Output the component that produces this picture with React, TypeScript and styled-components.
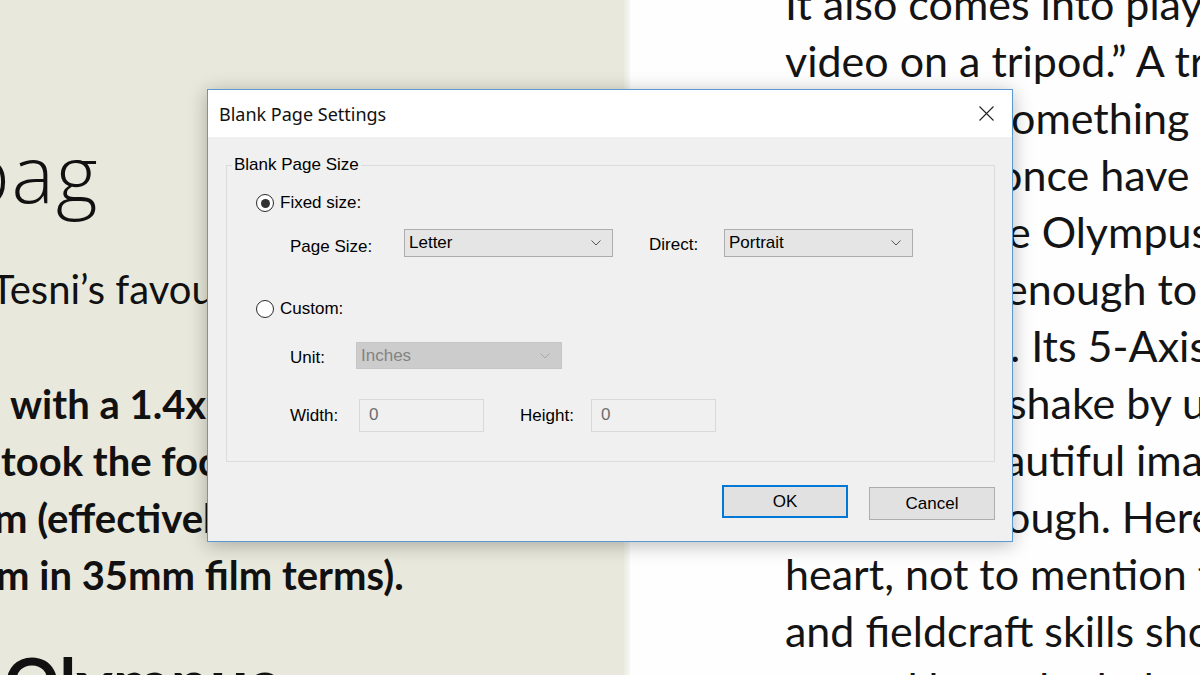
import React from 'react'
import styled, { createGlobalStyle } from 'styled-components'

const GlobalStyle = createGlobalStyle`
  html, body { margin: 0; padding: 0; }
  body { width: 1200px; height: 675px; overflow: hidden; background: #fefefe; }
  * { box-sizing: border-box; }
`

// ---- magazine spread behind the dialog ----

const Spread = styled.div`
  position: relative;
  display: flex;
  width: 1200px;
  height: 675px;
  overflow: hidden;
`

const LeftPage = styled.div`
  flex: none;
  width: 624px;
  padding-top: 131px;
  overflow: hidden;
  background: #e9e8dc;
  color: #111;
  font-family: Lato, "Liberation Sans", sans-serif;
  white-space: nowrap;
`

const Gutter = styled.div`
  flex: none;
  width: 6px;
  background: linear-gradient(to right, #ecebe2, #f7f7f3);
`

const RightPage = styled.div`
  flex: 1;
  padding-left: 155px;
  overflow: hidden;
  background: #fefefe;
  color: #141414;
  font-family: Lato, "Liberation Sans", sans-serif;
  font-size: 43px;
  line-height: 57px;
  white-space: nowrap;
`

const Column = styled.div`
  margin-top: -25px;
`

// the part of a line that sits under the dialog
const Covered = styled.span<{ $w: number }>`
  display: inline-block;
  width: ${p => p.$w}px;
  overflow: hidden;
  vertical-align: top;
`

const Headline = styled.div`
  margin-left: -38px;
  font-family: "Open Sans", Lato, sans-serif;
  font-size: 80px;
  font-weight: 300;
  letter-spacing: 2px;
  line-height: 81px;
`

const Intro = styled.div`
  margin: 49px 0 0 -9px;
  font-size: 40px;
  line-height: 57px;
`

const Caption = styled.div`
  margin-top: 58px;
  font-size: 40px;
  font-weight: 700;
  line-height: 57px;
`

const CaptionLine = styled.div<{ $shift: number }>`
  margin-left: ${p => p.$shift}px;
`

const SubHead = styled.div`
  margin: 49px 0 0 4px;
  font-size: 69px;
  font-weight: 700;
  line-height: 57px;
`

// ---- dialog ----

const Dialog = styled.div`
  position: absolute;
  left: 207px;
  top: 89px;
  width: 806px;
  height: 453px;
  display: flex;
  flex-direction: column;
  border: 1px solid #5a9ad2;
  background: #f0f0f0;
  box-shadow: 0 3px 18px rgba(0, 0, 0, 0.28);
  font-family: "Liberation Sans", Arial, sans-serif;
  font-size: 17px;
  color: #000;
`

const TitleBar = styled.div`
  height: 47px;
  display: flex;
  align-items: center;
  justify-content: space-between;
  padding: 0 18px 0 11px;
  background: #fff;
`

const Title = styled.div`
  font-family: "Noto Sans", sans-serif;
  font-size: 18px;
  color: #111;
`

const Body = styled.div`
  flex: 1;
  display: flex;
  flex-direction: column;
  padding: 18px 17px 0 18px;
`

const Group = styled.fieldset`
  margin: 0;
  padding: 0;
  border: 1px solid #dcdcdc;
`

const Legend = styled.legend`
  margin-left: 5px;
  padding: 0 2px;
  line-height: 20px;
`

const GroupInner = styled.div`
  display: flex;
  flex-direction: column;
  padding: 0 0 29px 29px;
`

const RadioRow = styled.div<{ $top: number }>`
  display: flex;
  align-items: center;
  gap: 6px;
  height: 22px;
  margin-top: ${p => p.$top}px;
`

const RadioCircle = styled.span<{ $checked?: boolean }>`
  position: relative;
  width: 18px;
  height: 18px;
  border: 1px solid #2b2b2b;
  border-radius: 50%;
  background: #fff;

  &::after {
    content: '';
    display: ${p => (p.$checked ? 'block' : 'none')};
    position: absolute;
    left: 3.5px;
    top: 3.5px;
    width: 9px;
    height: 9px;
    border-radius: 50%;
    background: #333;
  }
`

const FieldRow = styled.div<{ $top: number }>`
  display: flex;
  align-items: center;
  margin-top: ${p => p.$top}px;
  padding-left: 34px;
`

const Label = styled.span<{ $w: number; $gap?: number; $drop?: number }>`
  width: ${p => p.$w}px;
  margin-left: ${p => p.$gap || 0}px;
  padding-top: ${p => (p.$drop || 0) * 2}px;
`

const Combo = styled.div<{ $w: number; $disabled?: boolean }>`
  width: ${p => p.$w}px;
  height: ${p => (p.$disabled ? 27 : 28)}px;
  display: flex;
  align-items: center;
  justify-content: space-between;
  padding: 0 11px 0 4px;
  border: 1px solid ${p => (p.$disabled ? '#c6c6c6' : '#adadad')};
  background: ${p => (p.$disabled ? '#cccccc' : '#e5e5e5')};
  color: ${p => (p.$disabled ? '#838383' : '#000')};
`

const TextBox = styled.div`
  width: 125px;
  height: 33px;
  padding: 5px 9px;
  border: 1px solid #d9d9d9;
  background: #f0f0f0;
  color: #6d6d6d;
  line-height: 20px;
`

const Buttons = styled.div`
  display: flex;
  justify-content: flex-end;
  align-items: flex-start;
  gap: 21px;
  margin-top: 23px;
`

const Button = styled.div<{ $primary?: boolean }>`
  width: 126px;
  height: 33px;
  margin-top: ${p => (p.$primary ? 0 : 2)}px;
  display: flex;
  align-items: center;
  justify-content: center;
  border: ${p => (p.$primary ? '2px solid #0078d7' : '1px solid #adadad')};
  background: #e1e1e1;
`

const Chevron = ({ color }: { color: string }) => (
  <svg width="10" height="6" viewBox="0 0 10 6">
    <path d="M0.5 0.5 L5 5 L9.5 0.5" fill="none" stroke={color} strokeWidth="1" />
  </svg>
)

const CloseIcon = () => (
  <svg width="15" height="15" viewBox="0 0 15 15">
    <path d="M0.5 0.5 L14.5 14.5 M14.5 0.5 L0.5 14.5" stroke="#222" strokeWidth="1.1" />
  </svg>
)

type Line = { covered?: string; cut?: number; text: string }

const rightLines: Line[] = [
  { text: 'It also comes into play when' },
  { text: 'video on a tripod.\u201D A tripod' },
  { covered: 'Tesni says s', cut: 226, text: 'omething' },
  { covered: 'and I can at ', cut: 213, text: 'once have' },
  { covered: 'often with th', cut: 223, text: 'e Olympus' },
  { covered: 'and it\u2019s light ', cut: 220, text: 'enough to' },
  { covered: 'carry all day', cut: 225, text: '. Its 5-Axis' },
  { covered: 'IBIS reduces ', cut: 223, text: 'shake by using' },
  { covered: 'and takes be', cut: 219, text: 'autiful images' },
  { covered: 'it is tough en', cut: 221, text: 'ough. Here' },
  { text: 'heart, not to mention the' },
  { text: 'and fieldcraft skills show' },
  { text: 'around how she behaves' },
]

export default function App() {
  return (
    <>
      <GlobalStyle />
      <Spread>
        <LeftPage>
          <Headline>pag</Headline>
          <Intro>Tesni’s favourite</Intro>
          <Caption>
            <CaptionLine $shift={10}>with a 1.4x tele</CaptionLine>
            <CaptionLine $shift={1}>took the focal length</CaptionLine>
            <CaptionLine $shift={-6}>m (effectively</CaptionLine>
            <CaptionLine $shift={-4}>m in 35mm film terms).</CaptionLine>
          </Caption>
          <SubHead>Olympus</SubHead>
        </LeftPage>
        <Gutter />
        <RightPage>
          <Column>
            {rightLines.map(line => (
              <div key={line.text}>
                {line.covered && <Covered $w={line.cut || 0}>{line.covered}</Covered>}
                {line.text}
              </div>
            ))}
          </Column>
        </RightPage>

        <Dialog>
          <TitleBar>
            <Title>Blank Page Settings</Title>
            <CloseIcon />
          </TitleBar>
          <Body>
            <Group>
              <Legend>Blank Page Size</Legend>
              <GroupInner>
                <RadioRow $top={17}>
                  <RadioCircle $checked />
                  <span>Fixed size:</span>
                </RadioRow>
                <FieldRow $top={15}>
                  <Label $w={114} $drop={4}>Page Size:</Label>
                  <Combo $w={209}>
                    <span>Letter</span>
                    <Chevron color="#555" />
                  </Combo>
                  <Label $w={75} $gap={36} $drop={2}>Direct:</Label>
                  <Combo $w={189}>
                    <span>Portrait</span>
                    <Chevron color="#555" />
                  </Combo>
                </FieldRow>
                <RadioRow $top={41}>
                  <RadioCircle />
                  <span>Custom:</span>
                </RadioRow>
                <FieldRow $top={22}>
                  <Label $w={66} $drop={2}>Unit:</Label>
                  <Combo $w={206} $disabled>
                    <span>Inches</span>
                    <Chevron color="#a8a8a8" />
                  </Combo>
                </FieldRow>
                <FieldRow $top={30}>
                  <Label $w={69}>Width:</Label>
                  <TextBox>0</TextBox>
                  <Label $w={71} $gap={36}>Height:</Label>
                  <TextBox>0</TextBox>
                </FieldRow>
              </GroupInner>
            </Group>
            <Buttons>
              <Button $primary>OK</Button>
              <Button>Cancel</Button>
            </Buttons>
          </Body>
        </Dialog>
      </Spread>
    </>
  )
}
